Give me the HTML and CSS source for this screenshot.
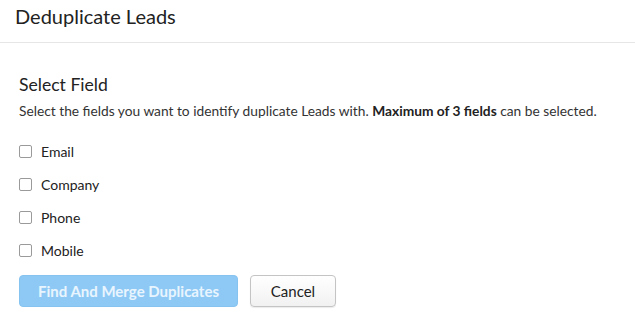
FILE: index.html
```html
<!DOCTYPE html>
<html>
<head>
<meta charset="utf-8">
<link rel="stylesheet" href="styles.css">
</head>
<body>
<div class="dialog">
  <div class="header"><h1 class="title">Deduplicate Leads</h1></div>
  <div class="body">
    <h2 class="section-title">Select Field</h2>
    <p class="desc">Select the fields you want to identify duplicate Leads with. <b>Maximum of 3 fields</b> can be selected.</p>
    <ul class="fields">
      <li class="field"><span class="box"></span><span class="label">Email</span></li>
      <li class="field"><span class="box"></span><span class="label">Company</span></li>
      <li class="field"><span class="box"></span><span class="label">Phone</span></li>
      <li class="field"><span class="box"></span><span class="label">Mobile</span></li>
    </ul>
    <div class="actions">
      <button class="btn btn-primary">Find And Merge Duplicates</button>
      <button class="btn btn-cancel">Cancel</button>
    </div>
  </div>
</div>
</body>
</html>
```

FILE: styles.css
```css
* { box-sizing: border-box; }
html, body { margin: 0; padding: 0; background: #fff; }
body { font-family: Lato, "Open Sans", sans-serif; color: #222; width: 635px; height: 320px; overflow: hidden; }
.header { height: 43px; border-bottom: 1px solid #e6e6e6; padding: 3px 15px 0; }
.title { margin: 0; font-weight: 400; font-size: 20px; line-height: 26px; color: #222; }
.body { padding: 30px 19px 0; }
.section-title { margin: 0; font-weight: 400; font-size: 17.6px; line-height: 24px; color: #222; }
.desc { margin: 4px 0 0; font-size: 13.75px; line-height: 19px; color: #333; }
.desc b { font-weight: 700; color: #222; }
.fields { list-style: none; margin: 21px 0 0; padding: 0; display: flex; flex-direction: column; gap: 13px; }
.field { display: flex; align-items: center; height: 20px; }
.box { width: 13px; height: 13px; border: 1px solid #9a9a9a; border-radius: 2px; background: #fff; }
.label { margin-left: 9px; font-size: 14px; color: #222; }
.actions { margin-top: 15px; display: flex; gap: 12px; }
.btn { font-family: Lato, "Open Sans", sans-serif; font-size: 15px; height: 32px; border-radius: 4px; cursor: pointer; }
.btn-primary { width: 219px; background: #8ec9f5; border: 1px solid #86c3f0; color: #e9f5fe; font-weight: 700; }
.btn-cancel { width: 86px; background: linear-gradient(#ffffff, #f1f1f1); border: 1px solid #c4c4c4; color: #222; box-shadow: 0 1px 1px rgba(0,0,0,0.08); }
```
